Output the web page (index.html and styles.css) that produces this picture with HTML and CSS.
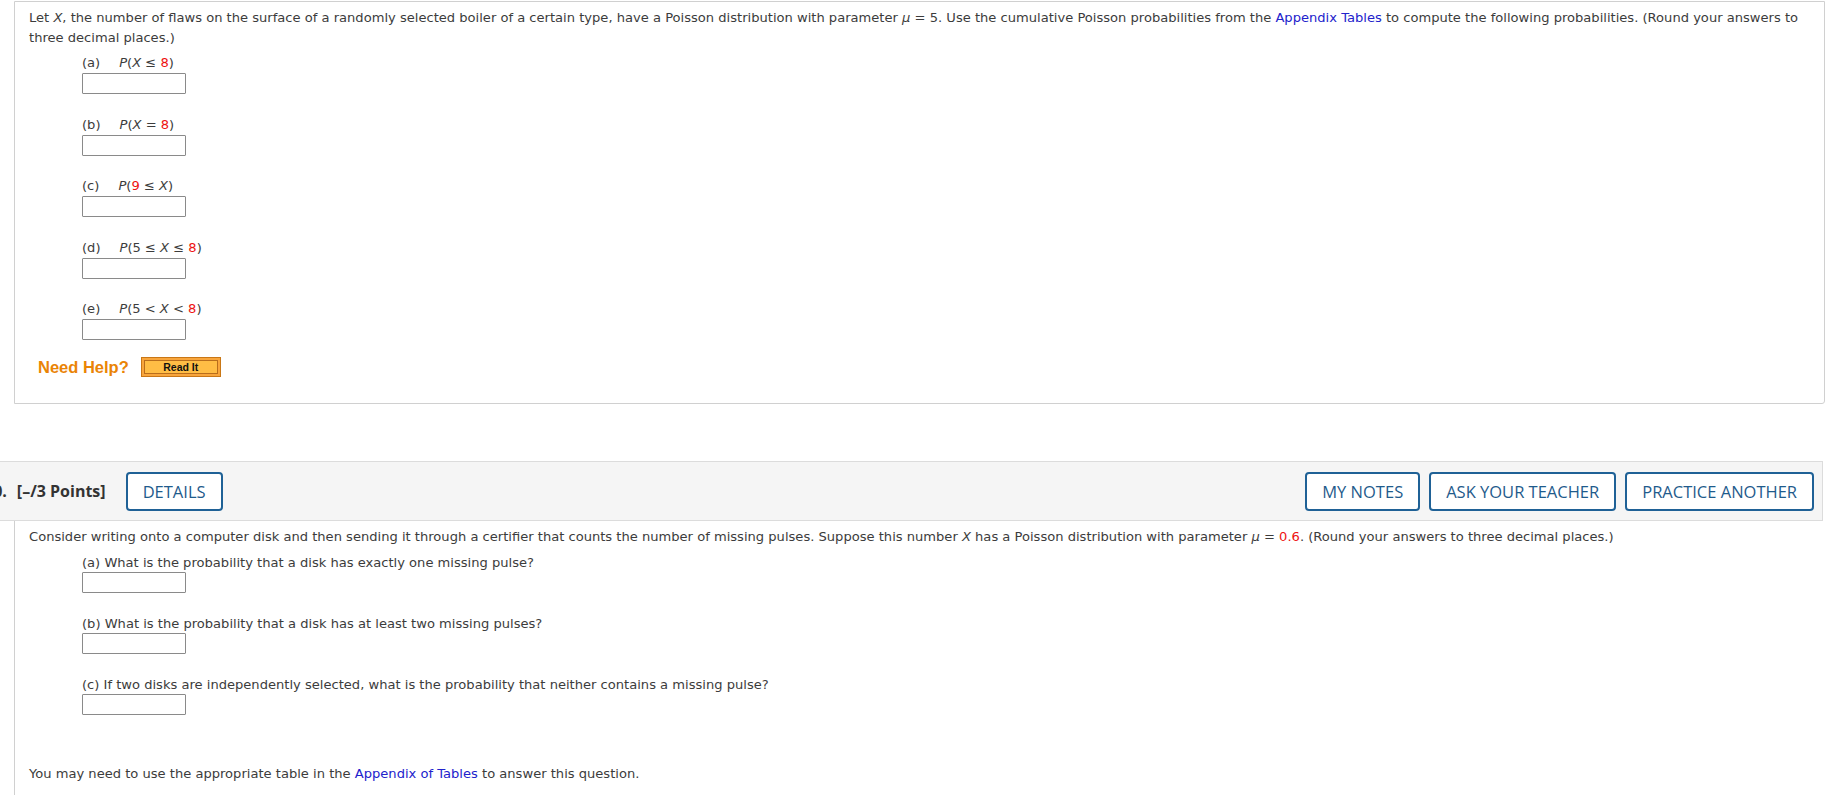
FILE: index.html
```html
<!DOCTYPE html>
<html>
<head>
<meta charset="utf-8">
<link rel="stylesheet" href="styles.css">
</head>
<body>
<div class="page">
  <div class="card first">
    <p class="intro">Let <i>X</i>, the number of flaws on the surface of a randomly selected boiler of a certain type, have a Poisson distribution with parameter <i>μ</i> = 5. Use the cumulative Poisson probabilities from the <a class="link">Appendix Tables</a> to compute the following probabilities. (Round your answers to three decimal places.)</p>
    <div class="parts">
      <div class="part">
        <div class="plabel"><span class="letter">(a)</span><i>P</i>(<i>X</i> ≤ <span class="red">8</span>)</div>
        <div class="answer"></div>
      </div>
      <div class="part">
        <div class="plabel"><span class="letter">(b)</span><i>P</i>(<i>X</i> = <span class="red">8</span>)</div>
        <div class="answer"></div>
      </div>
      <div class="part">
        <div class="plabel"><span class="letter">(c)</span><i>P</i>(<span class="red">9</span> ≤ <i>X</i>)</div>
        <div class="answer"></div>
      </div>
      <div class="part">
        <div class="plabel"><span class="letter">(d)</span><i>P</i>(5 ≤ <i>X</i> ≤ <span class="red">8</span>)</div>
        <div class="answer"></div>
      </div>
      <div class="part">
        <div class="plabel"><span class="letter">(e)</span><i>P</i>(5 &lt; <i>X</i> &lt; <span class="red">8</span>)</div>
        <div class="answer"></div>
      </div>
    </div>
    <div class="help">
      <span class="needhelp">Need Help?</span>
      <span class="readit"><span class="readit-inner">Read It</span></span>
    </div>
  </div>

  <div class="qheader">
    <span class="qnum">10.</span>
    <span class="points">[–/3 Points]</span>
    <span class="btn">DETAILS</span>
    <div class="actions">
      <span class="btn">MY NOTES</span>
      <span class="btn">ASK YOUR TEACHER</span>
      <span class="btn">PRACTICE ANOTHER</span>
    </div>
  </div>

  <div class="card second">
    <p class="intro">Consider writing onto a computer disk and then sending it through a certifier that counts the number of missing pulses. Suppose this number <i>X</i> has a Poisson distribution with parameter <i>μ</i> = <span class="red">0.6</span>. (Round your answers to three decimal places.)</p>
    <div class="parts2">
      <div class="part2">
        <div class="plabel">(a) What is the probability that a disk has exactly one missing pulse?</div>
        <div class="answer"></div>
      </div>
      <div class="part2">
        <div class="plabel">(b) What is the probability that a disk has at least two missing pulses?</div>
        <div class="answer"></div>
      </div>
      <div class="part2">
        <div class="plabel">(c) If two disks are independently selected, what is the probability that neither contains a missing pulse?</div>
        <div class="answer"></div>
      </div>
    </div>
    <p class="note">You may need to use the appropriate table in the <a class="link">Appendix of Tables</a> to answer this question.</p>
    <div class="help">
      <span class="needhelp">Need Help?</span>
      <span class="readit"><span class="readit-inner">Read It</span></span>
    </div>
  </div>
</div>
</body>
</html>
```

FILE: styles.css
```css
html, body {
  margin: 0;
  padding: 0;
  background: #ffffff;
  overflow: hidden;
}
body {
  width: 1831px;
  height: 795px;
  font-family: "DejaVu Sans", Verdana, sans-serif;
  font-size: 13.08px;
  color: #3c3c3c;
}
.page {
  padding-top: 1px;
}
.card {
  background: #fff;
}
.card.first {
  margin-left: 14px;
  width: 1809px;
  border: 1px solid #d0d0d0;
  border-radius: 0 0 3px 0;
  padding: 6px 0 26px 0;
}
.intro {
  margin: 0;
  padding: 0 14px 0 14px;
  line-height: 20px;
}
.link {
  color: #2222cc;
  text-decoration: none;
}
.red {
  color: #ee1111;
}
.parts {
  display: flex;
  flex-direction: column;
  gap: 20.5px;
  padding: 5px 0 0 67px;
}
.part {
  display: flex;
  flex-direction: column;
}
.plabel {
  line-height: 20px;
}
.letter {
  margin-right: 19px;
}
.answer {
  width: 102px;
  height: 19px;
  border: 1px solid #8a8a8a;
  border-radius: 1px;
  background: #fff;
}
.help {
  display: flex;
  align-items: center;
  gap: 12px;
  padding: 17px 0 0 23px;
}
.needhelp {
  font-family: "Liberation Sans", Arial, sans-serif;
  font-weight: bold;
  font-size: 16.5px;
  color: #ea8405;
}
.readit {
  display: flex;
  width: 80px;
  height: 20px;
  box-sizing: border-box;
  border: 1px solid #c97716;
  background: #f8a53c;
  padding: 2px;
}
.readit-inner {
  flex: 1;
  display: flex;
  align-items: center;
  justify-content: center;
  border: 1px solid #b86d1c;
  background: #ffbd45;
  font-family: "Liberation Sans", Arial, sans-serif;
  font-weight: bold;
  font-size: 10.5px;
  color: #111;
}
.qheader {
  margin-top: 57px;
  width: 1822px;
  height: 58px;
  box-sizing: content-box;
  background: #f5f5f5;
  border-top: 1px solid #dcdcdc;
  border-bottom: 1px solid #dcdcdc;
  border-right: 1px solid #dcdcdc;
  display: flex;
  align-items: center;
  font-family: "Open Sans", "Noto Sans", sans-serif;
}
.qnum {
  margin-left: -16px;
  font-weight: bold;
  font-size: 16px;
  color: #333;
}
.points {
  margin-left: 10px;
  font-weight: bold;
  font-size: 16px;
  color: #333;
}
.btn {
  display: flex;
  align-items: center;
  height: 39px;
  box-sizing: border-box;
  padding: 0 15px;
  border: 2px solid #1f6196;
  border-radius: 4px;
  background: #fff;
  color: #1f5b8c;
  font-size: 16.5px;
}
.points + .btn {
  margin-left: 20px;
}
.actions {
  margin-left: auto;
  margin-right: 8px;
  display: flex;
  gap: 9px;
}
.card.second {
  margin-left: 14px;
  border-left: 1px solid #d0d0d0;
  padding-top: 6px;
}
.parts2 {
  display: flex;
  flex-direction: column;
  gap: 21px;
  padding: 6px 0 0 67px;
}
.part2 {
  display: flex;
  flex-direction: column;
}
.part2 .answer {
  margin-top: -1px;
}
.note {
  margin: 49px 0 0 0;
  padding-left: 14px;
  line-height: 20px;
}
.card.second .help {
  padding-top: 12px;
}
```
